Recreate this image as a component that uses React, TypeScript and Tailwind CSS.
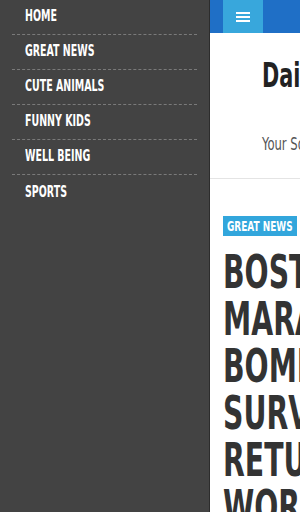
import React from "react";

const narrow = { fontFamily: '"DejaVu Sans Condensed", "DejaVu Sans", sans-serif' };

const items = ["HOME", "GREAT NEWS", "CUTE ANIMALS", "FUNNY KIDS", "WELL BEING", "SPORTS"];

export default function App() {
  return (
    <div className="flex w-[300px] h-[512px] overflow-hidden bg-white" style={narrow}>
      <nav className="w-[210px] shrink-0 h-full bg-[#434343] border-r border-[#2c2c2c] px-[12px]">
        <ul>
          {items.map((it, i) => (
            <li
              key={it}
              className={
                "h-[35px] flex items-center pl-[13px] text-white text-[15.5px] font-bold " +
                (i < items.length - 1 ? "border-b border-dashed border-[#7a7a7a]" : "")
              }
            >
              <span className="inline-block origin-left scale-x-[0.68] whitespace-nowrap">{it}</span>
            </li>
          ))}
        </ul>
      </nav>
      <main className="flex-1 min-w-0 h-full overflow-hidden">
        <header className="h-[33px] bg-[#1f6fc6] flex">
          <div className="w-[13px] shrink-0" />
          <button className="w-[40px] h-[33px] bg-[#38a7dc] flex flex-col items-center justify-center gap-[2px]">
            <span className="block w-[14px] h-[2px] bg-white" />
            <span className="block w-[14px] h-[2px] bg-white" />
            <span className="block w-[14px] h-[2px] bg-white" />
          </button>
        </header>
        <div className="h-[146px] border-b border-[#e4e4e4] pl-[52px] pt-[23px]">
          <div className="whitespace-nowrap text-[#222] text-[33px] font-bold leading-[40px]">
            <span className="inline-block origin-left scale-x-[0.7]">Daily Good News</span>
          </div>
          <div className="mt-[38px] whitespace-nowrap text-[#555] text-[17px] leading-[20px]">
            <span className="inline-block origin-left scale-x-[0.76]">Your Source for Good News</span>
          </div>
        </div>
        <div className="pl-[13px] pt-[37px]">
          <div className="flex items-center h-[20px] w-[74px] bg-[#32a6dc] text-white text-[14px] font-bold pl-[4px] whitespace-nowrap overflow-hidden">
            <span className="inline-block origin-left scale-x-[0.71]">GREAT NEWS</span>
          </div>
          <div className="mt-[12px] text-[#333] text-[47px] font-bold leading-[47px] whitespace-nowrap">
            {["BOSTON", "MARATHON", "BOMBING", "SURVIVOR", "RETURNS TO", "WORK"].map((w) => (
              <div key={w}>
                <span className="inline-block origin-left scale-x-[0.67]">{w}</span>
              </div>
            ))}
          </div>
        </div>
      </main>
    </div>
  );
}
